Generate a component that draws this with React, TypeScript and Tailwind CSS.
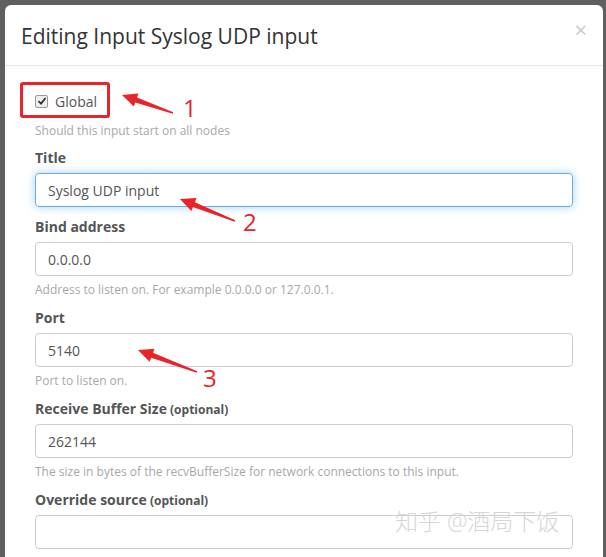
import React from "react";

type Pt = { x1: number; y1: number; x2: number; y2: number };

// red annotation arrow, tip at (x1,y1), tail at (x2,y2)
const Arrow: React.FC<Pt> = ({ x1, y1, x2, y2 }) => {
  const dx = x2 - x1;
  const dy = y2 - y1;
  const len = Math.hypot(dx, dy);
  const ux = dx / len;
  const uy = dy / len;
  const nx = -uy;
  const ny = ux;
  const head = 15;
  const hw = 7;
  const bx = x1 + ux * head;
  const by = y1 + uy * head;
  const pts = [
    [x1, y1],
    [bx + nx * hw, by + ny * hw],
    [bx + nx * 2.6, by + ny * 2.6],
    [x2 + nx * 0.8, y2 + ny * 0.8],
    [x2 - nx * 0.8, y2 - ny * 0.8],
    [bx - nx * 2.6, by - ny * 2.6],
    [bx - nx * hw, by - ny * hw],
  ]
    .map((p) => p.join(","))
    .join(" ");
  return <polygon points={pts} fill="#e8242b" />;
};

const Field: React.FC<{
  label: string;
  optional?: boolean;
  value: string;
  help?: string;
  focused?: boolean;
}> = ({ label, optional, value, help, focused }) => (
  <div className="mb-[10px]">
    <label className="block h-[20px] text-[14px] leading-[20px] font-bold text-[#555] mb-[5px]">
      {label}
      {optional && <span className="text-[12px] font-bold"> (optional)</span>}
    </label>
    <div
      className={
        focused
          ? "h-[34px] rounded-[4px] border border-[#66afe9] px-[12px] flex items-center text-[14px] text-[#555] shadow-[0_0_8px_rgba(102,175,233,0.6)]"
          : "h-[34px] rounded-[4px] border border-[#ccc] px-[12px] flex items-center text-[14px] text-[#555]"
      }
    >
      {value}
    </div>
    {help && <p className="mt-[5px] text-[12px] leading-[17px] text-[#a8a8a8]">{help}</p>}
  </div>
);

export default function App() {
  return (
    <div
      className="relative w-[606px] h-[557px] overflow-hidden bg-[#606060] pt-[5px] pl-[5px] pr-[3px]"
      style={{ fontFamily: '"Open Sans", "Noto Sans CJK SC", sans-serif' }}
    >
      <div className="bg-white rounded-t-[6px] h-[600px]">
        <div className="h-[61px] border-b border-[#e5e5e5] px-[16px] flex items-center justify-between">
          <h4 className="text-[21px] leading-[30px] text-[#333] mt-[1px]">Editing Input Syslog UDP input</h4>
          <span className="text-[22px] text-[#c9c9c9] -mt-[11px]">×</span>
        </div>
        <div className="px-[30px] pt-[25px]">
          <div className="flex items-center h-[20px]">
            <span className="w-[13px] h-[13px] rounded-[2px] border border-[#999] bg-[#eee] flex items-center justify-center">
              <svg width="10" height="10" viewBox="0 0 10 10">
                <path d="M1.5 5.2 L4 7.6 L8.6 2" fill="none" stroke="#333" strokeWidth="1.8" />
              </svg>
            </span>
            <span className="ml-[7px] text-[14px] text-[#555]">Global</span>
          </div>
          <p className="mt-[11px] mb-[9px] text-[12px] leading-[17px] text-[#a8a8a8]">Should this input start on all nodes</p>
          <Field label="Title" value="Syslog UDP input" focused />
          <Field label="Bind address" value="0.0.0.0" help="Address to listen on. For example 0.0.0.0 or 127.0.0.1." />
          <Field label="Port" value="5140" help="Port to listen on." />
          <Field
            label="Receive Buffer Size"
            optional
            value="262144"
            help="The size in bytes of the recvBufferSize for network connections to this input."
          />
          <Field label="Override source" optional value="" />
        </div>
      </div>

      {/* annotations */}
      <div className="absolute left-[20px] top-[82px] w-[90px] h-[36px] border-[3px] border-[#e8242b] rounded-[3px]" />
      <svg className="absolute left-0 top-0" width="606" height="557">
        <Arrow x1={122} y1={95} x2={173} y2={113} />
        <Arrow x1={180} y1={199} x2={235} y2={221} />
        <Arrow x1={138} y1={350} x2={197} y2={372} />
      </svg>
      <span className="absolute left-[183px] top-[96px] text-[24px] leading-[24px] text-[#e8242b]">1</span>
      <span className="absolute left-[243px] top-[210px] text-[24px] leading-[24px] text-[#e8242b]">2</span>
      <span className="absolute left-[203px] top-[366px] text-[24px] leading-[24px] text-[#e8242b]">3</span>
      <span className="absolute left-[395px] top-[506px] text-[23px] leading-[30px] font-light text-[#d6d6d6]">知乎 @酒局下饭</span>
    </div>
  );
}
